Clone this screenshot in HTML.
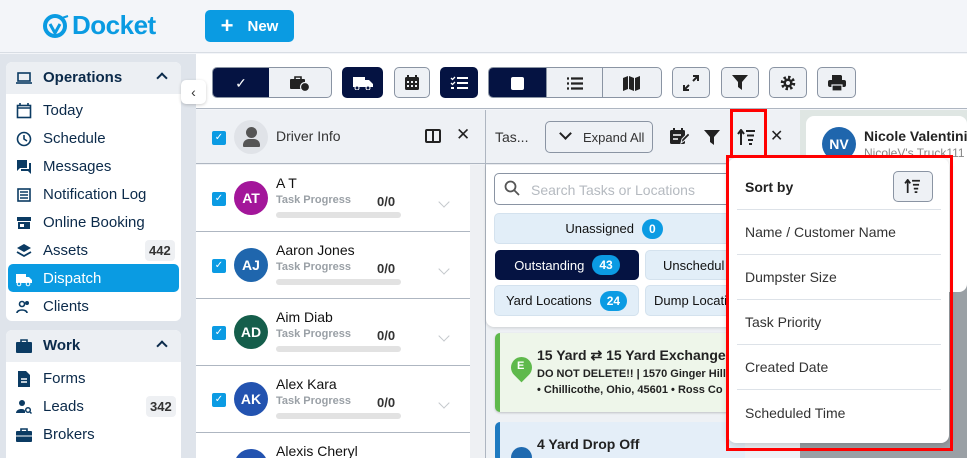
<!DOCTYPE html>
<html><head><meta charset="utf-8"><style>
*{box-sizing:border-box;margin:0;padding:0}
html,body{width:967px;height:458px;overflow:hidden}
body{background:#f3f5f9;font-family:"Liberation Sans",sans-serif;position:relative;color:#1f2937}
.a{position:absolute}
.btn{position:absolute;border:1px solid #8a94a3;border-radius:5px;background:#eef1f5;display:flex;align-items:center;justify-content:center}
.dk{background:#051342;border-color:#051342}
.nav{position:absolute;left:16px;font-size:15px;color:#0b2a4a;display:flex;align-items:center}
.nav svg{width:16px;height:16px;margin-right:11px}
.badge{position:absolute;background:#eef0f3;border-radius:4px;font-size:13px;font-weight:bold;color:#333;padding:3px 4px}
.row{position:absolute;left:196px;width:274px;height:67px;border-bottom:1px solid #aeb6c1;background:#fff}
.cb{position:absolute;left:16px;width:14px;height:14px;background:#0b9be3;border-radius:2px;color:#fff;font-size:10px;text-align:center;line-height:14px}
.av{position:absolute;left:38px;width:34px;height:34px;border-radius:50%;color:#fff;font-weight:bold;font-size:14px;display:flex;align-items:center;justify-content:center}
.nm{position:absolute;left:80px;font-size:14px;color:#111}
.tp{position:absolute;left:80px;font-size:11px;color:#9aa0a6;font-weight:bold}
.zz{position:absolute;left:181px;font-size:13px;font-weight:bold;color:#333}
.bar{position:absolute;left:80px;width:125px;height:6px;border-radius:3px;background:#e2e2e2}
.chev{position:absolute;left:244px;width:8px;height:8px;border-right:1.5px solid #c4c8cc;border-bottom:1.5px solid #c4c8cc;transform:rotate(45deg)}
.si{position:absolute;left:745px;font-size:14px;color:#333}
.sl{position:absolute;left:737px;width:204px;height:1px;background:#dde2e8}
.pill{position:absolute;border-radius:5px;background:#e2eef8;border:1px solid #d4e2ee;font-size:13px;display:flex;align-items:center;justify-content:center;color:#111}
.cnt{background:#0b9be3;color:#fff;font-weight:bold;font-size:12px;border-radius:12px;padding:3px 7px;margin-left:8px}
</style></head><body>
<!-- header -->
<div class="a" style="left:0;top:0;width:967px;height:53px;background:#f3f5f9;border-bottom:1px solid #d8dde4"></div>
<svg class="a" style="left:42px;top:13px" width="27" height="27" viewBox="0 0 27 27"><circle cx="13" cy="13" r="10" fill="none" stroke="#0a9be2" stroke-width="4"/><path d="M8 11 L13 20 L18 11" fill="none" stroke="#0a9be2" stroke-width="3"/><path d="M20 5 L26 3" stroke="#0a9be2" stroke-width="2"/></svg>
<div class="a" style="left:72px;top:10px;font-size:26px;font-weight:bold;color:#0a9be2;letter-spacing:-0.5px">Docket</div>
<div class="a" style="left:205px;top:10px;width:89px;height:32px;background:#0a9be2;border-radius:5px;color:#fff;font-weight:bold;font-size:15px;display:flex;align-items:center;justify-content:center"><span style="font-size:22px;margin-right:14px">+</span>New</div>
<!-- sidebar -->
<div class="a" style="left:0;top:54px;width:196px;height:404px;background:#dfe4eb"></div>
<div class="a" style="left:6px;top:62px;width:175px;height:259px;background:#fff;border-radius:6px;overflow:hidden"><div style="height:32px;background:#eceff3"></div></div>
<div class="nav" style="top:69px;font-weight:bold"><svg viewBox="0 0 16 16"><rect x="2" y="3" width="12" height="8" fill="none" stroke="#0b3b63" stroke-width="1.6"/><path d="M0 13h16" stroke="#0b3b63" stroke-width="1.6"/></svg>Operations</div>
<div class="a" style="left:158px;top:74px;width:8px;height:8px;border-left:2px solid #0b2a4a;border-top:2px solid #0b2a4a;transform:rotate(45deg)"></div>
<div class="nav" style="top:102px"><svg viewBox="0 0 16 16"><rect x="1.5" y="2.5" width="13" height="12" fill="none" stroke="#0b3b63" stroke-width="1.6"/><path d="M1.5 5h13M4 0v3M12 0v3" stroke="#0b3b63" stroke-width="1.6"/></svg>Today</div>
<div class="nav" style="top:130px"><svg viewBox="0 0 16 16"><circle cx="8" cy="8" r="6.5" fill="none" stroke="#0b3b63" stroke-width="1.6"/><path d="M8 4v4l3 2" fill="none" stroke="#0b3b63" stroke-width="1.6"/></svg>Schedule</div>
<div class="nav" style="top:158px"><svg viewBox="0 0 16 16"><path d="M1 1h10v8H4l-3 3z" fill="#0b3b63"/><path d="M13 4h2v11l-3-3H5v-2h8z" fill="#0b3b63"/></svg>Messages</div>
<div class="nav" style="top:186px"><svg viewBox="0 0 16 16"><rect x="2" y="2" width="12" height="12" fill="none" stroke="#0b3b63" stroke-width="1.6"/><path d="M4 5h8M4 8h8M4 11h8" stroke="#0b3b63" stroke-width="1.4"/></svg>Notification Log</div>
<div class="nav" style="top:214px"><svg viewBox="0 0 16 16"><path d="M1 2h14v4H1zM2 7h12v7H2z" fill="#0b3b63"/><rect x="4" y="9" width="4" height="3" fill="#fff"/></svg>Online Booking</div>
<div class="nav" style="top:242px"><svg viewBox="0 0 16 16"><path d="M8 1l7 4-7 4-7-4z" fill="#0b3b63"/><path d="M1 9l7 4 7-4" fill="none" stroke="#0b3b63" stroke-width="1.8"/></svg>Assets</div>
<div class="badge" style="left:145px;top:240px">442</div>
<div class="a" style="left:8px;top:264px;width:171px;height:28px;background:#0a9be2;border-radius:5px"></div>
<div class="nav" style="top:270px;color:#fff"><svg viewBox="0 0 16 16"><path d="M0 3h10v9H0zM10 6h3l3 3v3h-6z" fill="#fff"/><circle cx="3" cy="13" r="1.8" fill="#0a9be2" stroke="#fff"/><circle cx="12" cy="13" r="1.8" fill="#0a9be2" stroke="#fff"/></svg>Dispatch</div>
<div class="nav" style="top:298px"><svg viewBox="0 0 16 16"><circle cx="6" cy="5" r="2.5" fill="none" stroke="#0b3b63" stroke-width="1.6"/><path d="M1 14c0-4 10-4 10 0" fill="none" stroke="#0b3b63" stroke-width="1.6"/><circle cx="11" cy="4" r="2" fill="#0b3b63"/></svg>Clients</div>
<div class="a" style="left:6px;top:330px;width:175px;height:140px;background:#fff;border-radius:6px;overflow:hidden"><div style="height:32px;background:#eceff3"></div></div>
<div class="nav" style="top:337px;font-weight:bold"><svg viewBox="0 0 16 16"><path d="M5 4V2h6v2" fill="none" stroke="#0b3b63" stroke-width="1.6"/><rect x="0" y="4" width="16" height="11" rx="1" fill="#0b3b63"/></svg>Work</div>
<div class="a" style="left:158px;top:342px;width:8px;height:8px;border-left:2px solid #0b2a4a;border-top:2px solid #0b2a4a;transform:rotate(45deg)"></div>
<div class="nav" style="top:370px"><svg viewBox="0 0 16 16"><path d="M2 0h8l4 4v12H2z" fill="#0b3b63"/><path d="M5 8h6M5 11h6" stroke="#fff" stroke-width="1.4"/></svg>Forms</div>
<div class="nav" style="top:398px"><svg viewBox="0 0 16 16"><circle cx="6" cy="4" r="3" fill="#0b3b63"/><path d="M0 14c0-5 9-5 9-2v2z" fill="#0b3b63"/><circle cx="12" cy="11" r="2.3" fill="none" stroke="#0b3b63" stroke-width="1.5"/><path d="M13.5 12.5l2 2" stroke="#0b3b63" stroke-width="1.5"/></svg>Leads</div>
<div class="badge" style="left:146px;top:396px">342</div>
<div class="nav" style="top:426px"><svg viewBox="0 0 16 16"><path d="M5 4V2h6v2" fill="none" stroke="#0b3b63" stroke-width="1.6"/><rect x="0" y="4" width="16" height="11" rx="1" fill="#0b3b63"/><path d="M0 9h16" stroke="#fff"/></svg>Brokers</div>
<!-- toolbar -->
<div class="a" style="left:196px;top:54px;width:771px;height:55px;background:#fff;border-bottom:1px solid #aeb6c1"></div>
<div class="a" style="left:181px;top:80px;width:25px;height:24px;background:#fff;border-radius:5px;box-shadow:0 1px 3px rgba(0,0,0,.2);font-size:14px;text-align:center;line-height:24px;color:#333">‹</div>
<div class="btn" style="left:212px;top:67px;width:120px;height:31px;overflow:hidden"><div style="position:absolute;left:0;top:0;width:56px;height:31px;background:#051342;color:#fff;text-align:center;line-height:30px;font-size:14px">✓</div><svg style="position:absolute;left:77px;top:7px" width="20" height="17" viewBox="0 0 20 17"><path d="M5 4V2h6v2" fill="none" stroke="#222" stroke-width="1.6"/><rect x="0" y="4" width="15" height="10" rx="1" fill="#222"/><circle cx="15" cy="12" r="4.5" fill="#222" stroke="#eef1f5" stroke-width="1.2"/></svg></div>
<div class="btn dk" style="left:342px;top:67px;width:41px;height:31px"><svg width="20" height="14" viewBox="0 0 20 14"><path d="M0 1h12v10H0zM12 4h4l4 4v3h-8z" fill="#fff"/><circle cx="4" cy="12" r="2" fill="#051342" stroke="#fff"/><circle cx="15" cy="12" r="2" fill="#051342" stroke="#fff"/></svg></div>
<div class="btn" style="left:394px;top:67px;width:36px;height:31px"><svg width="14" height="15" viewBox="0 0 14 15"><rect x="0" y="2" width="14" height="13" rx="1.5" fill="#222"/><path d="M3 0v3M11 0v3" stroke="#222" stroke-width="2"/><g fill="#eef1f5"><rect x="2" y="6" width="2" height="2"/><rect x="6" y="6" width="2" height="2"/><rect x="10" y="6" width="2" height="2"/><rect x="2" y="10" width="2" height="2"/><rect x="6" y="10" width="2" height="2"/><rect x="10" y="10" width="2" height="2"/></g></svg></div>
<div class="btn dk" style="left:440px;top:67px;width:38px;height:31px"><svg width="18" height="14" viewBox="0 0 18 14"><path d="M1 2l1.5 1.5L5 1M1 7l1.5 1.5L5 6" fill="none" stroke="#fff" stroke-width="1.3"/><path d="M7 2h11M7 7h11M7 12h11M1 12h3" stroke="#fff" stroke-width="2"/></svg></div>
<div class="btn" style="left:488px;top:67px;width:174px;height:31px;overflow:hidden"><div style="position:absolute;left:0;top:0;width:57px;height:31px;background:#051342"></div><div style="position:absolute;left:22px;top:9px;width:13px;height:13px;background:#fff;border-radius:2px"></div><div style="position:absolute;left:57px;top:0;width:1px;height:31px;background:#8a94a3"></div><div style="position:absolute;left:113px;top:0;width:1px;height:31px;background:#8a94a3"></div><svg style="position:absolute;left:78px;top:9px" width="16" height="13" viewBox="0 0 16 13"><path d="M0 1.5h2M4 1.5h12M0 6.5h2M4 6.5h12M0 11.5h2M4 11.5h12" stroke="#222" stroke-width="2.2"/></svg><svg style="position:absolute;left:134px;top:8px" width="17" height="15" viewBox="0 0 17 15"><path d="M0 2l5-2v13l-5 2zM6 0l5 2v13l-5-2zM12 2l5-2v13l-5 2z" fill="#222"/></svg></div>
<div class="btn" style="left:672px;top:67px;width:38px;height:31px"><svg width="16" height="16" viewBox="0 0 16 16"><path d="M10 1h5v5M15 1l-5 5M6 15H1v-5M1 15l5-5" fill="none" stroke="#222" stroke-width="2"/></svg></div>
<div class="btn" style="left:721px;top:67px;width:38px;height:31px"><svg width="16" height="15" viewBox="0 0 16 15"><path d="M0 0h16l-6 7v8l-4-3V7z" fill="#222"/></svg></div>
<div class="btn" style="left:769px;top:67px;width:38px;height:31px"><svg width="16" height="16" viewBox="0 0 16 16"><circle cx="8" cy="8" r="5.5" fill="none" stroke="#222" stroke-width="3.5" stroke-dasharray="2.3 2"/><circle cx="8" cy="8" r="4.5" fill="#222"/><circle cx="8" cy="8" r="2" fill="#eef1f5"/></svg></div>
<div class="btn" style="left:817px;top:67px;width:39px;height:31px"><svg width="18" height="16" viewBox="0 0 18 16"><path d="M4 0h9l1 1v4H4z" fill="#222"/><rect x="0" y="5" width="18" height="7" rx="2" fill="#222"/><rect x="4" y="10" width="10" height="6" fill="#222" stroke="#eef1f5" stroke-width="1.2"/></svg></div>
<!-- driver panel -->
<div class="a" style="left:196px;top:110px;width:290px;height:348px;background:#f0f2f5"></div>
<div class="a" style="left:196px;top:110px;width:290px;height:54px;background:#eef1f5;border-bottom:1px solid #aeb6c1"></div>
<div class="cb" style="left:212px;top:131px">✓</div>
<div class="a" style="left:234px;top:120px;width:34px;height:34px;border-radius:50%;background:#e0e3e8"></div>
<div class="a" style="left:246px;top:127px;width:11px;height:11px;border-radius:50%;background:#555"></div>
<div class="a" style="left:243px;top:139px;width:17px;height:8px;border-radius:6px 6px 1px 1px;background:#555"></div>
<div class="a" style="left:276px;top:128px;font-size:14px;color:#333">Driver Info</div>
<div class="a" style="left:425px;top:129px;width:16px;height:14px;border:2px solid #222;border-radius:2px"><div style="position:absolute;left:5px;top:0;width:2px;height:10px;background:#222"></div></div>
<div class="a" style="left:456px;top:125px;font-size:17px;color:#222">✕</div>
<div class="a" style="left:469px;top:165px;width:17px;height:293px;background:#eef0f3"></div>
<div class="row" style="top:165px"><div class="cb" style="top:27px">✓</div><div class="av" style="top:16px;background:#a3169a">AT</div><div class="nm" style="top:10px">A T</div><div class="tp" style="top:29px">Task Progress</div><div class="zz" style="top:29px">0/0</div><div class="bar" style="top:47px"></div><div class="chev" style="top:33px"></div></div>
<div class="row" style="top:232px"><div class="cb" style="top:27px">✓</div><div class="av" style="top:16px;background:#1f66ad">AJ</div><div class="nm" style="top:10px">Aaron Jones</div><div class="tp" style="top:29px">Task Progress</div><div class="zz" style="top:29px">0/0</div><div class="bar" style="top:47px"></div><div class="chev" style="top:33px"></div></div>
<div class="row" style="top:299px"><div class="cb" style="top:27px">✓</div><div class="av" style="top:16px;background:#155e4b">AD</div><div class="nm" style="top:10px">Aim Diab</div><div class="tp" style="top:29px">Task Progress</div><div class="zz" style="top:29px">0/0</div><div class="bar" style="top:47px"></div><div class="chev" style="top:33px"></div></div>
<div class="row" style="top:366px"><div class="cb" style="top:27px">✓</div><div class="av" style="top:16px;background:#2353b0">AK</div><div class="nm" style="top:10px">Alex Kara</div><div class="tp" style="top:29px">Task Progress</div><div class="zz" style="top:29px">0/0</div><div class="bar" style="top:47px"></div><div class="chev" style="top:33px"></div></div>
<div class="row" style="top:433px;height:25px;border:0"><div class="av" style="top:16px;background:#2353b0"></div><div class="nm" style="top:10px">Alexis Cheryl</div></div>
<!-- task panel -->
<div class="a" style="left:485px;top:110px;width:1px;height:348px;background:#aeb6c1"></div>
<div class="a" style="left:486px;top:110px;width:314px;height:348px;background:#eef1f5"></div>
<div class="a" style="left:486px;top:110px;width:314px;height:54px;border-bottom:1px solid #aeb6c1"></div>
<div class="a" style="left:495px;top:129px;font-size:14px;color:#333">Tas...</div>
<div class="a" style="left:545px;top:121px;width:108px;height:32px;border:1px solid #8a94a3;border-radius:5px;background:#eef1f5;font-size:13px;color:#333;padding:8px 0 0 37px">Expand All</div>
<div class="a" style="left:561px;top:129px;width:9px;height:9px;border-right:2px solid #222;border-bottom:2px solid #222;transform:rotate(45deg)"></div>
<svg class="a" style="left:670px;top:128px" width="19" height="17" viewBox="0 0 19 17"><path d="M4 0v3M12 0v3" stroke="#222" stroke-width="2"/><rect x="0" y="2" width="15" height="14" rx="1.5" fill="#222"/><path d="M3 7h8M3 11h5" stroke="#fff" stroke-width="1.5"/><path d="M11 15l1-4 6-6 2 2-6 6z" fill="#222" stroke="#eef1f5"/></svg>
<svg class="a" style="left:704px;top:130px" width="16" height="15" viewBox="0 0 16 15"><path d="M0 0h16l-6 7v8l-4-3V7z" fill="#222"/></svg>
<svg class="a" style="left:737px;top:129px" width="19" height="16" viewBox="0 0 19 16"><path d="M4 16V2M1 5l3-4 3 4" fill="none" stroke="#222" stroke-width="2"/><path d="M9 2h9M10 6.5h7M11 11h5M12 15h3" stroke="#222" stroke-width="2"/></svg>
<div class="a" style="left:770px;top:126px;font-size:16px;color:#222">✕</div>
<div class="a" style="left:486px;top:165px;width:314px;height:162px;background:#fff;border-radius:0 0 8px 8px;box-shadow:0 1px 3px rgba(0,0,0,.15)"></div>
<div class="a" style="left:494px;top:173px;width:260px;height:32px;border:1px solid #8a94a3;border-radius:5px;background:#fff"></div>
<svg class="a" style="left:504px;top:180px" width="16" height="16" viewBox="0 0 16 16"><circle cx="6.5" cy="6.5" r="5" fill="none" stroke="#555" stroke-width="1.8"/><path d="M10 10l5 5" stroke="#555" stroke-width="1.8"/></svg>
<div class="a" style="left:531px;top:182px;font-size:14px;color:#b5bac0">Search Tasks or Locations</div>
<div class="pill" style="left:494px;top:213px;width:240px;height:31px">Unassigned <span class="cnt">0</span></div>
<div class="pill" style="left:495px;top:250px;width:144px;height:30px;background:#051342;border-color:#051342;color:#fff">Outstanding <span class="cnt">43</span></div>
<div class="pill" style="left:645px;top:250px;width:90px;height:30px;justify-content:flex-start;padding-left:17px">Unschedul</div>
<div class="pill" style="left:494px;top:285px;width:145px;height:31px">Yard Locations <span class="cnt">24</span></div>
<div class="pill" style="left:645px;top:285px;width:90px;height:31px;justify-content:flex-start;padding-left:8px">Dump Locati</div>
<div class="a" style="left:495px;top:333px;width:250px;height:79px;background:#eef6ea;border-left:5px solid #5fb94c;border-radius:5px;box-shadow:0 1px 2px rgba(0,0,0,.2)"></div>
<div class="a" style="left:511px;top:357px;width:21px;height:21px;background:#5fb94c;border-radius:50% 50% 50% 0;transform:rotate(-45deg)"></div>
<div class="a" style="left:517px;top:360px;font-size:11px;color:#fff;font-weight:bold">E</div>
<div class="a" style="left:537px;top:347px;font-size:14px;font-weight:bold;color:#222">15 Yard ⇄ 15 Yard Exchange</div>
<div class="a" style="left:537px;top:368px;font-size:11px;font-weight:bold;color:#222">DO NOT DELETE!! | 1570 Ginger Hill</div>
<div class="a" style="left:537px;top:384px;font-size:11px;font-weight:bold;color:#222">• Chillicothe, Ohio, 45601 • Ross Co</div>
<div class="a" style="left:495px;top:422px;width:250px;height:40px;background:#e4eef8;border-left:5px solid #1f7ac0;border-radius:5px"></div>
<div class="a" style="left:537px;top:436px;font-size:14px;font-weight:bold;color:#222">4 Yard Drop Off</div>
<div class="a" style="left:511px;top:447px;width:21px;height:21px;background:#1f6ab0;border-radius:50%"></div>
<!-- right map panel -->
<div class="a" style="left:800px;top:110px;width:167px;height:348px;background:#9aa0a5"></div>
<div class="a" style="left:800px;top:110px;width:167px;height:90px;background:#dfe6e3"></div>
<div class="a" style="left:806px;top:116px;width:161px;height:176px;background:#fff;border-radius:8px"></div>
<div class="a" style="left:822px;top:127px;width:34px;height:34px;border-radius:50%;background:#1f66ad;color:#fff;font-weight:bold;font-size:14px;display:flex;align-items:center;justify-content:center">NV</div>
<div class="a" style="left:864px;top:128px;font-size:14px;font-weight:bold;color:#222;white-space:nowrap">Nicole Valentini</div>
<div class="a" style="left:864px;top:146px;font-size:12px;color:#888;white-space:nowrap">NicoleV's Truck111</div>
<!-- sort dropdown -->
<div class="a" style="left:728px;top:158px;width:221px;height:285px;background:#fff;border-radius:8px;box-shadow:0 2px 8px rgba(0,0,0,.2)"></div>
<div class="a" style="left:745px;top:179px;font-size:14px;font-weight:bold;color:#222">Sort by</div>
<div class="a" style="left:893px;top:171px;width:40px;height:31px;border:1px solid #8a94a3;border-radius:5px;background:#eef1f5"></div>
<svg class="a" style="left:904px;top:179px" width="17" height="14" viewBox="0 0 19 16"><path d="M4 16V2M1 5l3-4 3 4" fill="none" stroke="#222" stroke-width="2"/><path d="M9 2h9M10 6.5h7M11 11h5M12 15h3" stroke="#222" stroke-width="2"/></svg>
<div class="sl" style="top:209px"></div>
<div class="si" style="top:224px">Name / Customer Name</div>
<div class="sl" style="top:254px"></div>
<div class="si" style="top:269px">Dumpster Size</div>
<div class="sl" style="top:299px"></div>
<div class="si" style="top:314px">Task Priority</div>
<div class="sl" style="top:344px"></div>
<div class="si" style="top:359px">Created Date</div>
<div class="sl" style="top:389px"></div>
<div class="si" style="top:405px">Scheduled Time</div>
<!-- red outlines -->
<div class="a" style="left:730px;top:109px;width:37px;height:48px;border:3px solid #f00;border-bottom:0"></div>
<div class="a" style="left:726px;top:155px;width:227px;height:296px;border:3px solid #f00"></div>
</body></html>
